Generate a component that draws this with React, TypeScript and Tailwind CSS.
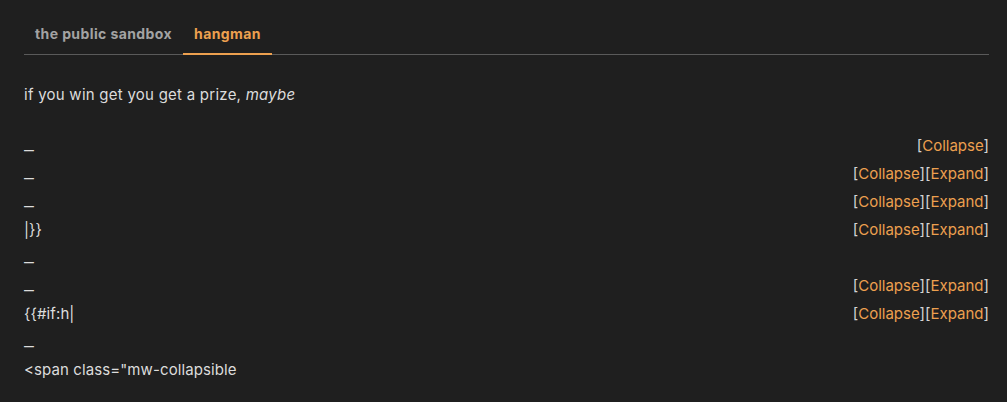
import React from "react";

type Row = { text: string; links: string[] };

const rows: Row[] = [
  { text: "_", links: ["Collapse"] },
  { text: "_", links: ["Collapse", "Expand"] },
  { text: "_", links: ["Collapse", "Expand"] },
  { text: "|}}", links: ["Collapse", "Expand"] },
  { text: "_", links: [] },
  { text: "_", links: ["Collapse", "Expand"] },
  { text: "{{#if:h|", links: ["Collapse", "Expand"] },
  { text: "_", links: [] },
  { text: '<span class="mw-collapsible', links: [] },
];

function Tab({ label, active }: { label: string; active?: boolean }) {
  return (
    <button
      className={
        active
          ? "-mb-px border-b-2 border-[#eda04f] px-[11px] pt-2 pb-[9px] text-[14px] leading-5 font-bold tracking-[0.4px] text-[#eda04f]"
          : "-mb-px border-b-2 border-transparent px-[11px] pt-2 pb-[9px] text-[14px] leading-5 font-bold tracking-[0.4px] text-[#a3a3a3]"
      }
    >
      {label}
    </button>
  );
}

export default function App() {
  return (
    <div className="min-h-screen bg-[#1f1f1f] pt-4 pl-6 pr-[18px] font-['Inter',sans-serif] text-[15px] text-[#dcdcdc]">
      <div className="flex border-b border-[#5a5a5a]">
        <Tab label="the public sandbox" />
        <Tab label="hangman" active />
      </div>

      <p className="mt-[26px] leading-7 tracking-[0.25px]">
        if you win get you get a prize, <i>maybe</i>
      </p>

      <div className="mt-[23px] flex flex-col">
        {rows.map((r, i) => (
          <div key={i} className="flex h-7 items-center justify-between">
            {r.text === "_" ? (
              <span className="inline-block origin-left scale-x-[1.45] -translate-y-px">_</span>
            ) : (
              <span className="tracking-[0.1px]">{r.text}</span>
            )}
            {r.links.length > 0 && (
              <span className="text-[#d4d4d4]">
                {r.links.map((l) => (
                  <span key={l}>
                    [<a className="cursor-pointer text-[#eda04f]">{l}</a>]
                  </span>
                ))}
              </span>
            )}
          </div>
        ))}
      </div>
    </div>
  );
}
